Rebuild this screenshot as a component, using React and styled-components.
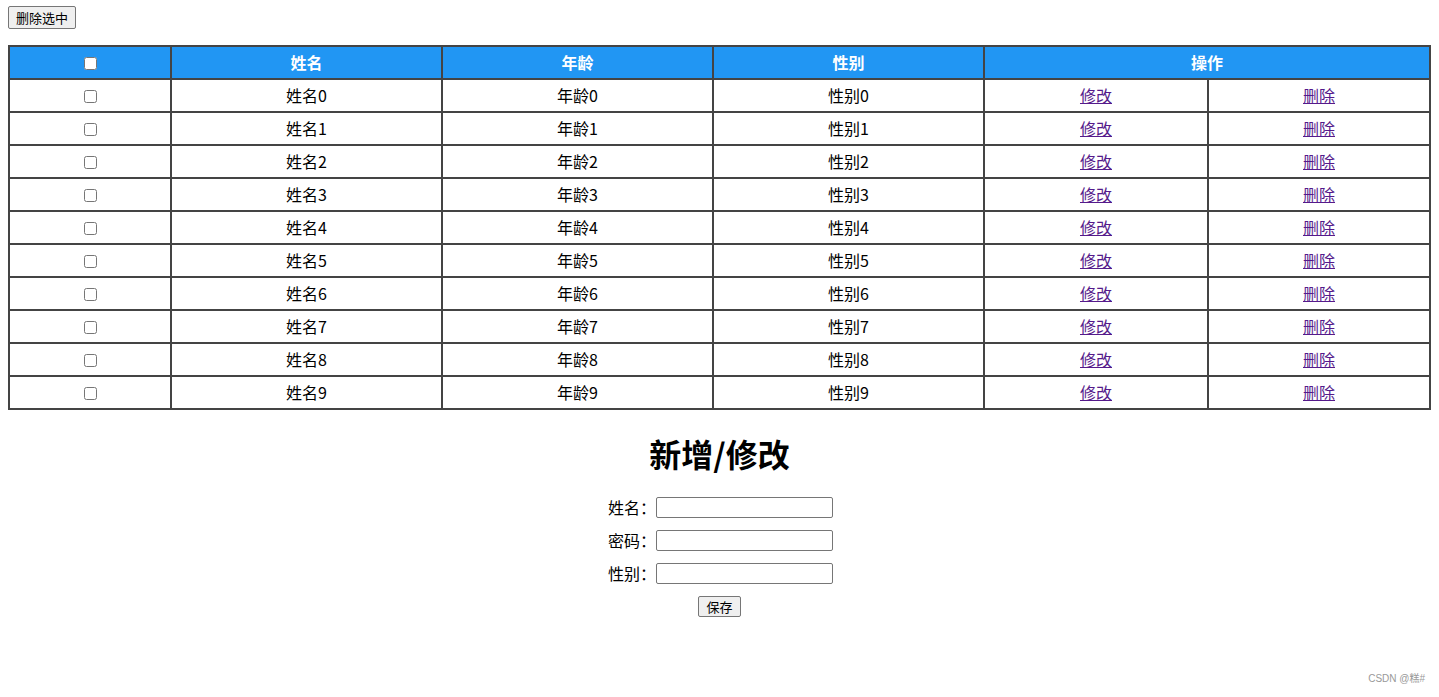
import React, { useState } from 'react'
import styled, { createGlobalStyle } from 'styled-components'

const GlobalStyle = createGlobalStyle`
  html, body {
    margin: 0;
    background: #fff;
  }
  body {
    padding: 8px;
    font-family: "Liberation Sans", "Noto Sans CJK SC", sans-serif;
    color: #000;
  }
`

const Page = styled.div`
  position: relative;
  min-height: 681px;
  font-family: "Noto Sans CJK SC", sans-serif;
  font-size: 16px;
`

const Button = styled.button`
  font-family: "Noto Sans CJK SC", sans-serif;
  font-size: 13px;
  line-height: 17px;
  padding: 1px 7px;
  background: #efefef;
  border: 1px solid #767676;
  border-radius: 2px;
  color: #000;
  cursor: pointer;
`

const Toolbar = styled.div`
  display: flex;
  height: 23px;
  margin-top: -2px;
  margin-bottom: 16px;
`

const Table = styled.table`
  width: 100%;
  border-collapse: collapse;
  table-layout: fixed;
  border: 2px solid #444;
`

const Col = styled.col`
  width: ${({ w }) => w}px;
`

const Th = styled.th`
  background: #2196f3;
  color: #fff;
  font-weight: bold;
  border: 2px solid #444;
  padding: 5px 0;
  line-height: 21px;
  text-align: center;
`

const Td = styled.td`
  border: 2px solid #444;
  padding: 5px 0;
  line-height: 21px;
  text-align: center;
`

const Check = styled.input.attrs({ type: 'checkbox' })`
  margin: 0;
  width: 13px;
  height: 13px;
  vertical-align: middle;
  position: relative;
  top: -1px;
`

const Link = styled.a`
  color: #551a8b;
  text-decoration: underline;
  cursor: pointer;
`

const Heading = styled.h1`
  font-size: 32px;
  font-weight: bold;
  line-height: 42px;
  text-align: center;
  margin: 22px 0 23px;
`

const Form = styled.div`
  display: flex;
  flex-direction: column;
  align-items: center;
  gap: 12px;
`

const Row = styled.label`
  display: flex;
  align-items: center;
  height: 21px;
  padding-left: 2px;
`

const Label = styled.span`
  width: 48px;
  line-height: 21px;
`

const Input = styled.input`
  box-sizing: border-box;
  width: 177px;
  height: 21px;
  padding: 1px 2px;
  border: 1px solid #767676;
  border-radius: 2px;
  font-size: 13px;
`

const Watermark = styled.div`
  position: absolute;
  right: 6px;
  bottom: 2px;
  font-family: "Liberation Sans", "Noto Sans CJK SC", sans-serif;
  font-size: 10px;
  color: #999;
`

const widths = [162, 271, 271, 271, 224, 222]

const rows = Array.from({ length: 10 }, (_, i) => ({
  name: `姓名${i}`,
  age: `年龄${i}`,
  sex: `性别${i}`,
}))

export default function App() {
  const [checked, setChecked] = useState({})

  return (
    <Page>
      <GlobalStyle />
      <Toolbar>
        <Button>删除选中</Button>
      </Toolbar>
      <Table>
        <colgroup>
          {widths.map((w, i) => <Col key={i} w={w} />)}
        </colgroup>
        <thead>
          <tr>
            <Th><Check /></Th>
            <Th>姓名</Th>
            <Th>年龄</Th>
            <Th>性别</Th>
            <Th colSpan={2}>操作</Th>
          </tr>
        </thead>
        <tbody>
          {rows.map((r, i) => (
            <tr key={i}>
              <Td>
                <Check
                  checked={!!checked[i]}
                  onChange={() => setChecked({ ...checked, [i]: !checked[i] })}
                />
              </Td>
              <Td>{r.name}</Td>
              <Td>{r.age}</Td>
              <Td>{r.sex}</Td>
              <Td><Link>修改</Link></Td>
              <Td><Link>删除</Link></Td>
            </tr>
          ))}
        </tbody>
      </Table>
      <Heading>新增/修改</Heading>
      <Form>
        <Row><Label>姓名：</Label><Input /></Row>
        <Row><Label>密码：</Label><Input /></Row>
        <Row><Label>性别：</Label><Input /></Row>
        <Button>保存</Button>
      </Form>
      <Watermark>CSDN @糕#</Watermark>
    </Page>
  )
}
